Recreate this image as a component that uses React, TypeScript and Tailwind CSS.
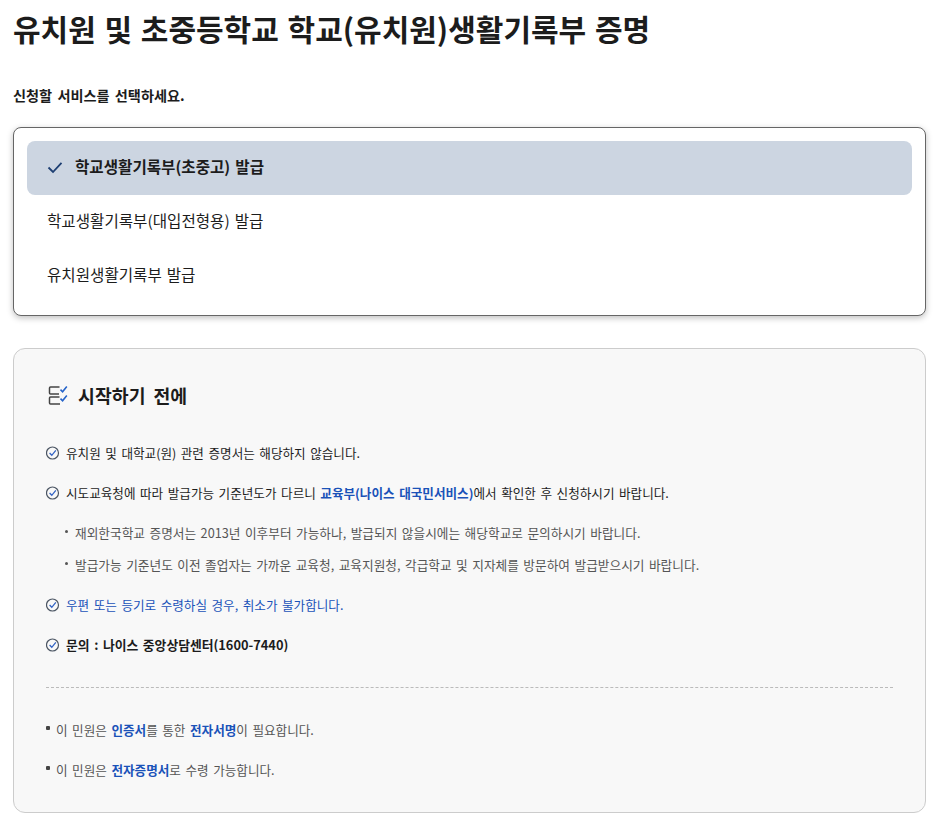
import React from 'react';

const FONT = "font-['Noto_Sans_CJK_KR','Noto_Sans',sans-serif]";

function CheckCircle() {
  return (
    <svg className="h-[14px] w-[14px] shrink-0" viewBox="0 0 14 14" fill="none" aria-hidden>
      <circle cx="6.5" cy="7" r="6" stroke="#4b5563" strokeWidth="1.2" />
      <path d="M3.6 7 5.8 9.3 9.8 4.4" stroke="#3263c4" strokeWidth="1.3" />
    </svg>
  );
}

function ChecklistIcon() {
  return (
    <svg className="h-[22px] w-[22px] shrink-0" viewBox="0 0 22 22" fill="none" aria-hidden>
      <path d="M13.5 3H4.5a1 1 0 0 0-1 1v5a1 1 0 0 0 1 1h8.5" stroke="#444" strokeWidth="1.5" />
      <path d="M13.5 13H4.5a1 1 0 0 0-1 1v5a1 1 0 0 0 1 1h9.5" stroke="#444" strokeWidth="1.5" />
      <path d="M14.5 5.6 16.6 7.7 20.8 2.6M14.5 14.6 16.6 16.7 20.8 11.6" stroke="#2563c9" strokeWidth="1.6" />
    </svg>
  );
}

function ServiceOption({ label, selected }: { label: string; selected?: boolean }) {
  if (selected) {
    return (
      <div className="flex h-[54px] items-center rounded-lg bg-[#ccd5e1] px-5 pb-[3px]">
        <svg className="mr-3 h-4 w-4 shrink-0" viewBox="0 0 16 16" fill="none" aria-hidden>
          <path d="M1.5 8.5 6 13 14.5 3.8" stroke="#1d3f72" strokeWidth="1.8" />
        </svg>
        <span className="text-[15.6px] font-bold text-[#1c1c1c] [word-spacing:1.5px]">{label}</span>
      </div>
    );
  }
  return (
    <div className="flex h-[54px] items-center px-5 pb-[3px]">
      <span className="text-[15.6px] text-[#1c1c1c] [word-spacing:1.5px]">{label}</span>
    </div>
  );
}

function Notice({ children }: { children: React.ReactNode }) {
  return (
    <li className="flex h-[40px] items-center gap-[6px] text-[12.6px] text-[#1c1c1c] [word-spacing:1.7px]">
      <CheckCircle />
      <span>{children}</span>
    </li>
  );
}

function SubNotice({ children }: { children: React.ReactNode }) {
  return (
    <li className="flex h-[32px] items-center pl-[19px] text-[12.7px] text-[#555] [word-spacing:1.6px]">
      <span className="mr-[7px] mb-1 h-[3px] w-[3px] rounded-full bg-[#555]" />
      <span>{children}</span>
    </li>
  );
}

function Bullet({ children }: { children: React.ReactNode }) {
  return (
    <li className="flex h-[40px] items-center text-[12.6px] text-[#555] [word-spacing:1.7px]">
      <span className="mr-[6px] mb-1 h-1 w-1 rounded-[1px] bg-[#444]" />
      <span>{children}</span>
    </li>
  );
}

const Em = ({ children }: { children: React.ReactNode }) => (
  <strong className="font-bold text-[#1a52b8]">{children}</strong>
);

export default function App() {
  return (
    <div className={`${FONT} min-h-[826px] bg-white pt-[5px] pr-[15px] pl-[13px]`}>
      <h1 className="text-[30px] leading-[46px] font-bold text-[#1c1c1c] [word-spacing:1.9px]">
        유치원 및 초중등학교 학교(유치원)생활기록부 증명
      </h1>
      <p className="mt-[33px] text-[14.2px] leading-[22px] font-bold text-[#1c1c1c] [word-spacing:2px]">신청할 서비스를 선택하세요.</p>

      <div className="mt-[21px] rounded-lg border border-[#666] bg-white px-[13px] pt-[13px] pb-[12px] shadow-[0_2px_6px_rgba(0,0,0,0.25)]">
        <ServiceOption label="학교생활기록부(초중고) 발급" selected />
        <ServiceOption label="학교생활기록부(대입전형용) 발급" />
        <ServiceOption label="유치원생활기록부 발급" />
      </div>

      <div className="mt-[32px] rounded-xl border border-[#ccc] bg-[#f8f8f8] px-[32px] pt-[31px] pb-[22px]">
        <div className="flex items-center gap-[10px]">
          <ChecklistIcon />
          <h2 className="text-[18.3px] leading-[30px] font-bold tracking-[0.1px] text-[#1c1c1c] [word-spacing:3.5px]">시작하기 전에</h2>
        </div>
        <ul className="mt-[23px]">
          <Notice>유치원 및 대학교(원) 관련 증명서는 해당하지 않습니다.</Notice>
          <Notice>
            시도교육청에 따라 발급가능 기준년도가 다르니 <Em>교육부(나이스 대국민서비스)</Em>에서 확인한 후 신청하시기 바랍니다.
          </Notice>
          <div className="py-1">
            <SubNotice>재외한국학교 증명서는 2013년 이후부터 가능하나, 발급되지 않을시에는 해당학교로 문의하시기 바랍니다.</SubNotice>
            <SubNotice>발급가능 기준년도 이전 졸업자는 가까운 교육청, 교육지원청, 각급학교 및 지자체를 방문하여 발급받으시기 바랍니다.</SubNotice>
          </div>
          <Notice>
            <span className="text-[#1a52b8]">우편 또는 등기로 수령하실 경우, 취소가 불가합니다.</span>
          </Notice>
          <Notice>
            <strong className="text-[12.8px] font-bold">문의 : 나이스 중앙상담센터(1600-7440)</strong>
          </Notice>
        </ul>
        <div className="mt-[22px] border-t border-dashed border-[#bbb]" />
        <ul className="mt-[22px]">
          <Bullet>
            이 민원은 <Em>인증서</Em>를 통한 <Em>전자서명</Em>이 필요합니다.
          </Bullet>
          <Bullet>
            이 민원은 <Em>전자증명서</Em>로 수령 가능합니다.
          </Bullet>
        </ul>
      </div>
    </div>
  );
}
